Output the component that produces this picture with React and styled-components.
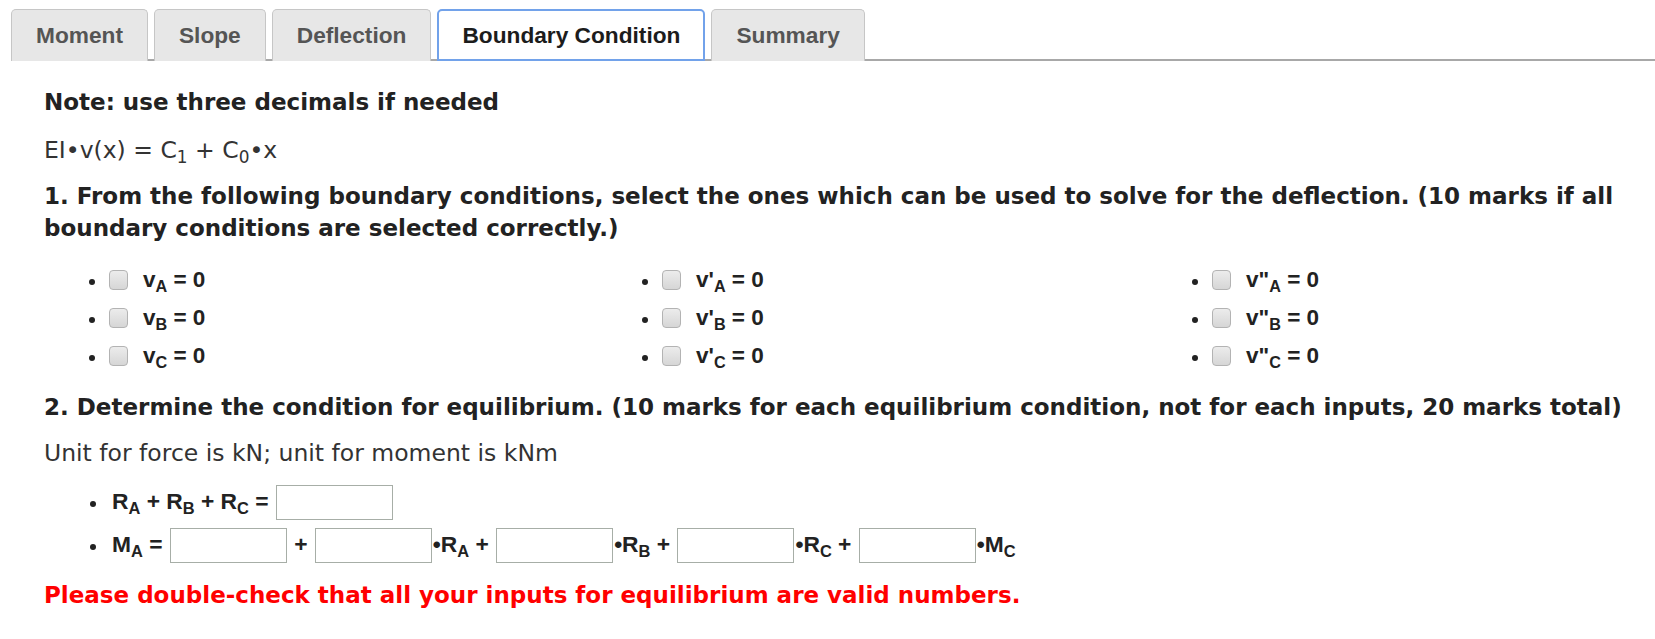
import React, { useState } from "react";
import styled, { createGlobalStyle, css } from "styled-components";

const GlobalStyle = createGlobalStyle`
  body {
    margin: 0;
    background: #fff;
    font-family: "DejaVu Sans", Verdana, sans-serif;
    color: #333;
  }
`;

const TabBar = styled.div`
  display: flex;
  gap: 6px;
  margin: 9px 0 0 11px;
  border-bottom: 2px solid #a8a8a8;
`;

const Tab = styled.button`
  height: 52px;
  margin-bottom: -2px;
  padding: 0 24px;
  border: 1px solid #c6c6c6;
  border-bottom: none;
  border-radius: 5px 5px 0 0;
  background: #e7e7e7;
  font-family: "Liberation Sans", Arial, sans-serif;
  font-weight: bold;
  font-size: 22.7px;
  color: #555;
  cursor: pointer;

  ${(p) =>
    p.$active &&
    css`
      background: #fff;
      color: #1c1c1c;
      border: 2px solid #72a2ea;
      padding: 0 23px;
    `}
`;

const Content = styled.div`
  padding: 25px 20px 0 44px;
  font-size: 23px;
  line-height: 32px;
`;

const Para = styled.p`
  margin: ${(p) => p.$top || 16}px 0 0;
  font-weight: ${(p) => (p.$bold ? "bold" : "normal")};
  font-size: ${(p) => (p.$bold ? "23px" : "23.5px")};
  color: ${(p) => (p.$red ? "#ff0000" : p.$bold ? "#222" : "#333")};
  &:first-child {
    margin-top: 0;
  }
`;

const Sub = styled.sub`
  font-size: 0.72em;
  line-height: 0;
  vertical-align: -0.3em;
`;

const CondGrid = styled.div`
  display: grid;
  grid-template-columns: 553px 550px 1fr;
  margin: 17px 0 0 45px;
`;

const CondList = styled.ul`
  margin: 0;
  padding: 0;
  list-style: none;
`;

const bullet = css`
  &::before {
    content: "";
    width: 6px;
    height: 6px;
    margin: 3px 14px 0 0;
    border-radius: 50%;
    background: #222;
    flex: none;
  }
`;

const CondItem = styled.li`
  display: flex;
  align-items: center;
  height: 38px;
  ${bullet}
`;

const Check = styled.input.attrs({ type: "checkbox" })`
  appearance: none;
  width: 19px;
  height: 20px;
  margin: 0 15px 0 0;
  border: 1px solid #b3b3b3;
  border-radius: 4px;
  background: linear-gradient(#ececec, #d6d6d6);
  cursor: pointer;
  &:checked {
    background: #72a2ea;
  }
`;

const Label = styled.span`
  font-family: "Liberation Sans", Arial, sans-serif;
  font-weight: bold;
  font-size: 22.5px;
  color: #222;
`;

const EqList = styled.ul`
  margin: 12px 0 0 46px;
  padding: 0;
  list-style: none;
`;

const EqItem = styled.li`
  display: flex;
  align-items: center;
  height: 43px;
  ${bullet}
  &::before {
    margin-right: 16px;
  }
`;

const Formula = styled.span`
  font-family: "Liberation Sans", Arial, sans-serif;
  font-weight: bold;
  font-size: 22.8px;
  color: #222;
  white-space: nowrap;
`;

const Field = styled.input.attrs({ type: "text" })`
  width: 117px;
  height: 35px;
  box-sizing: border-box;
  margin: 0 1px;
  border: 1px solid #a7aea7;
  vertical-align: middle;
  font-size: 16px;
`;

const tabs = ["Moment", "Slope", "Deflection", "Boundary Condition", "Summary"];

const conds = [
  ["v", "A"],
  ["v", "B"],
  ["v", "C"],
  ["v'", "A"],
  ["v'", "B"],
  ["v'", "C"],
  ['v"', "A"],
  ['v"', "B"],
  ['v"', "C"],
];

export default function App() {
  const [active, setActive] = useState("Boundary Condition");
  const columns = [conds.slice(0, 3), conds.slice(3, 6), conds.slice(6, 9)];

  return (
    <>
      <GlobalStyle />
      <TabBar>
        {tabs.map((t) => (
          <Tab key={t} $active={t === active} onClick={() => setActive(t)}>
            {t}
          </Tab>
        ))}
      </TabBar>
      <Content>
        <Para $bold>Note: use three decimals if needed</Para>
        <Para>
          EI•v(x) = C<Sub>1</Sub> + C<Sub>0</Sub>•x
        </Para>
        <Para $bold $top={14}>
          1. From the following boundary conditions, select the ones which can be used to solve for
          the deflection. (10 marks if all boundary conditions are selected correctly.)
        </Para>
        <CondGrid>
          {columns.map((col, i) => (
            <CondList key={i}>
              {col.map(([v, s]) => (
                <CondItem key={v + s}>
                  <Check />
                  <Label>
                    {v}
                    <Sub>{s}</Sub> = 0
                  </Label>
                </CondItem>
              ))}
            </CondList>
          ))}
        </CondGrid>
        <Para $bold $top={16}>
          2. Determine the condition for equilibrium. (10 marks for each equilibrium condition, not
          for each inputs, 20 marks total)
        </Para>
        <Para $top={14}>Unit for force is kN; unit for moment is kNm</Para>
        <EqList>
          <EqItem>
            <Formula>
              R<Sub>A</Sub> + R<Sub>B</Sub> + R<Sub>C</Sub> = <Field />
            </Formula>
          </EqItem>
          <EqItem>
            <Formula>
              M<Sub>A</Sub> = <Field /> + <Field />•R<Sub>A</Sub> + <Field />•R<Sub>B</Sub> +{" "}
              <Field />•R<Sub>C</Sub> + <Field />•M<Sub>C</Sub>
            </Formula>
          </EqItem>
        </EqList>
        <Para $bold $red $top={12}>
          Please double-check that all your inputs for equilibrium are valid numbers.
        </Para>
      </Content>
    </>
  );
}
